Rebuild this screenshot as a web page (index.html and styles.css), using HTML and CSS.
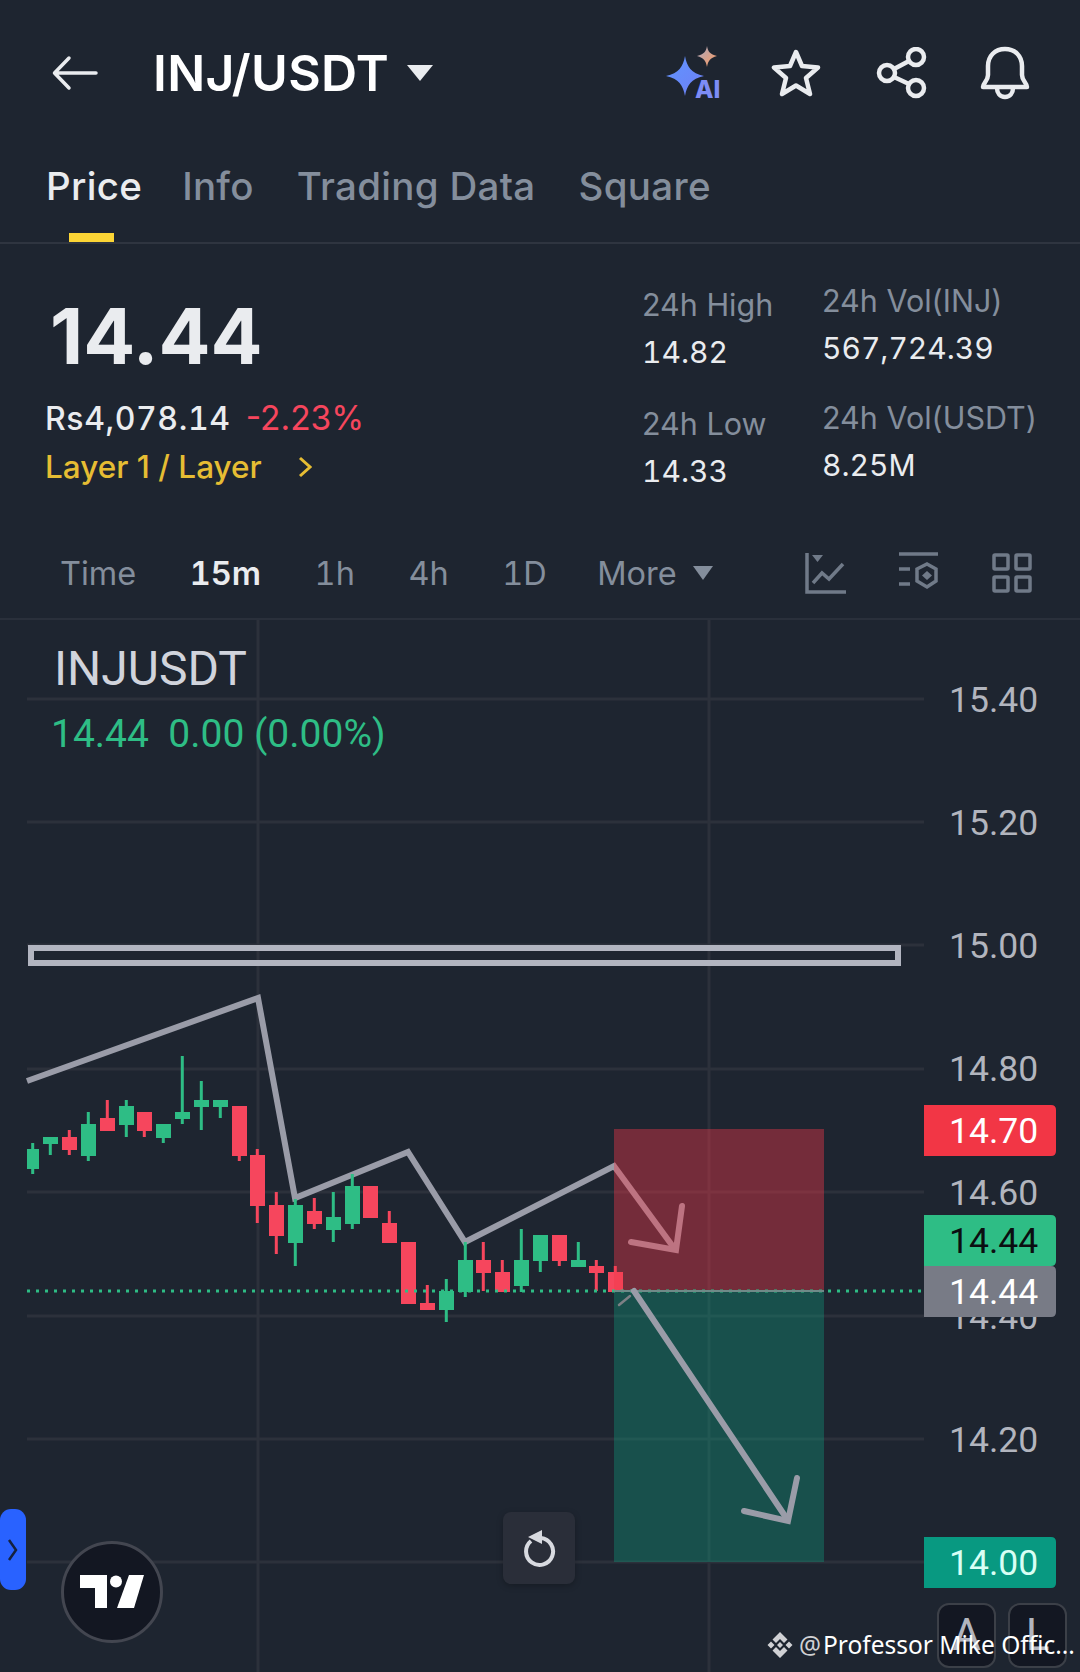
FILE: index.html
```html
<!DOCTYPE html>
<html>
    <head>
        <meta charset="UTF-8">
        <title>INJ/USDT</title>
        <link rel="stylesheet" href="styles.css">
    </head>
    <body>
        <header class="topbar">
            <svg class="back" width="46" height="36" viewBox="0 0 46 36"><path d="M44 18H3M17 3 2.500 18 17 33"/></svg>
            <h1 class="pair">INJ/USDT</h1>
            <span class="caret"></span>
            <div class="topicons">
                <svg class="aiicon" width="56" height="62" viewBox="0 -3 56 62">
                    <defs>
                        <linearGradient id="aiBlue" x1="0" y1="0" x2="1" y2="1"><stop offset="0" stop-color="#5f95ff"/><stop offset="1" stop-color="#6f7ff5"/></linearGradient>
                        <linearGradient id="aiPink" x1="0" y1="0" x2="1" y2="1"><stop offset="0" stop-color="#a7a9c4"/><stop offset="1" stop-color="#ff9a5c"/></linearGradient>
                    </defs>
                    <path class="spark" d="M20 11C22 22 26 28 39 31 26 34 22 40 20 51 18 40 14 34 1 31 14 28 18 22 20 11Z" fill="url(#aiBlue)"/>
                    <path d="M42 1C43 7 45 9 52 11 45 13 43 16 42 22 41 16 39 13 32 11 39 9 41 7 42 1Z" fill="url(#aiPink)"/>
                    <text class="ai" x="30" y="53">AI</text>
                </svg>
                <svg class="line star" width="50" height="50" viewBox="0 0 50 50"><path d="M25 4 31 18 47 19.500 35 30 39 46 25 37.500 11 46 15 30 3 19.500 19 18Z"/></svg>
                <svg class="line" width="52" height="52" viewBox="0 0 52 52"><circle cx="11" cy="26" r="8"/><circle cx="40" cy="10" r="8"/><circle cx="40" cy="41" r="8"/><path d="M18 22 33 14M18 30 33 37"/></svg>
                <svg class="line" width="52" height="54" viewBox="0 0 52 54"><path d="M4 41C4 37 9 35 9 29V20C9 10 16 3 26 3S43 10 43 20V29C43 35 48 37 48 41Z"/><path d="M18 42C18 47 21 51 26 51S34 47 34 42"/></svg>
            </div>
        </header>

        <nav class="tabs">
            <a class="tab active">Price</a>
            <a class="tab">Info</a>
            <a class="tab">Trading Data</a>
            <a class="tab">Square</a>
        </nav>

        <section class="stats">
            <div class="priceblock">
                <div class="bigprice">14.44</div>
                <div class="fiat">Rs4,078.14 <span class="down">-2.23%</span></div>
                <div class="sector">Layer 1 / Layer
                    <svg width="14" height="22" viewBox="0 0 14 22"><path d="M2 2 12 11 2 20"/></svg>
                </div>
            </div>
            <div class="statcol highlow">
                <div class="label">24h High</div>
                <div class="value">14.82</div>
                <div class="label">24h Low</div>
                <div class="value">14.33</div>
            </div>
            <div class="statcol vols">
                <div class="label">24h Vol(INJ)</div>
                <div class="value">567,724.39</div>
                <div class="label">24h Vol(USDT)</div>
                <div class="value">8.25M</div>
            </div>
        </section>

        <div class="intervals">
            <a class="interval time">Time</a>
            <a class="interval active">15m</a>
            <a class="interval">1h</a>
            <a class="interval">4h</a>
            <a class="interval">1D</a>
            <a class="interval more">More <span class="caret small"></span></a>
            <div class="charticons">
                <svg class="indicator" width="42" height="42" viewBox="0 0 42 42"><path d="M2 1V40H41M8 31 17 21 24 27 38 12"/><path class="solid" d="M7 3H18L12.500 10Z"/></svg>
                <svg width="42" height="42" viewBox="0 0 42 42"><path d="M2 2H41M2 17H13M2 32H13M30 12 39 17V29L30 35 20 29V17Z"/><path class="solid" d="M30 19 35 23.500 30 28 25 23.500Z"/></svg>
                <svg width="40" height="40" viewBox="0 0 40 40"><rect x="2" y="2" width="14" height="14" rx="1"/><rect x="24" y="2" width="14" height="14" rx="1"/><rect x="2" y="24" width="14" height="14" rx="1"/><rect x="24" y="24" width="14" height="14" rx="1"/></svg>
            </div>
        </div>

        <main class="chart">
            <svg class="canvas" width="1080" height="1052" viewBox="0 620 1080 1052">
                <g class="grid">
                    <path d="M27 699H924M27 822H924M27 945H924M27 1069H924M27 1192H924M27 1316H924M27 1439H924M27 1562H924"/>
                    <path d="M258 620V1672M709 620V1672"/>
                </g>

                <rect class="channel" x="31" y="948" width="867" height="15"/>
                <path class="drawing trend" d="M27 1081 258 998 295 1198 408 1152 465 1242 614 1166 674 1248"/>
                <path class="drawing" d="M682 1206 676 1250 631 1242"/>

                <g class="wick up">
                    <path d="M32.700 1143V1174M50.300 1137V1155M88.300 1112V1161M126.300 1100V1137M163.300 1124V1143M182.300 1056V1124M201.300 1081V1130M220.300 1100V1118M295.300 1199V1266M333.300 1192V1242M352.300 1174V1229M446.300 1279V1322M465.300 1242V1297M521.300 1229V1292M540.300 1235V1272M578.300 1242V1267"/>
                </g>
                <g class="wick down">
                    <path d="M69.300 1130V1155M107.300 1100V1131M144.300 1112V1137M239.300 1106V1161M257.300 1149V1223M276.300 1192V1254M314.300 1198V1229M389.300 1211V1243M427.300 1285V1310M483.300 1242V1291M502.300 1260V1292M559.300 1235V1266M596.300 1260V1291M615.300 1266V1292"/>
                </g>
                <g class="body up">
                    <rect x="27" y="1149" width="12" height="20"/>
                    <rect x="43" y="1137" width="15" height="7"/>
                    <rect x="81" y="1124" width="15" height="32"/>
                    <rect x="119" y="1106" width="15" height="19"/>
                    <rect x="156" y="1124" width="15" height="14"/>
                    <rect x="175" y="1112" width="15" height="7"/>
                    <rect x="194" y="1100" width="15" height="7"/>
                    <rect x="213" y="1100" width="15" height="7"/>
                    <rect x="288" y="1205" width="15" height="38"/>
                    <rect x="326" y="1217" width="15" height="13"/>
                    <rect x="345" y="1186" width="15" height="38"/>
                    <rect x="439" y="1291" width="15" height="19"/>
                    <rect x="458" y="1260" width="15" height="32"/>
                    <rect x="514" y="1260" width="15" height="26"/>
                    <rect x="533" y="1235" width="15" height="26"/>
                    <rect x="571" y="1260" width="15" height="7"/>
                </g>
                <g class="body down">
                    <rect x="62" y="1137" width="15" height="13"/>
                    <rect x="100" y="1118" width="15" height="13"/>
                    <rect x="137" y="1112" width="15" height="19"/>
                    <rect x="232" y="1106" width="15" height="50"/>
                    <rect x="250" y="1155" width="15" height="51"/>
                    <rect x="269" y="1205" width="15" height="31"/>
                    <rect x="307" y="1211" width="15" height="13"/>
                    <rect x="363" y="1186" width="15" height="32"/>
                    <rect x="382" y="1223" width="15" height="20"/>
                    <rect x="401" y="1242" width="15" height="62"/>
                    <rect x="420" y="1303" width="15" height="7"/>
                    <rect x="476" y="1260" width="15" height="13"/>
                    <rect x="495" y="1272" width="15" height="20"/>
                    <rect x="552" y="1235" width="15" height="26"/>
                    <rect x="589" y="1266" width="15" height="7"/>
                    <rect x="608" y="1272" width="15" height="20"/>
                </g>

                <rect class="stop" x="614" y="1129" width="210" height="162"/>
                <rect class="target" x="614" y="1291" width="210" height="271"/>
                <path class="lastline" d="M27 1291H924"/>
                <path class="midline" d="M614 1291H824"/>

                <path class="drawing" d="M634 1291 787 1519"/>
                <path class="drawing" d="M797 1478 788 1521 744 1511"/>
                <path class="drawing thin" d="M619 1305 630 1296"/>

                <g class="axis">
                    <text x="949" y="712">15.40</text>
                    <text x="949" y="835">15.20</text>
                    <text x="949" y="958">15.00</text>
                    <text x="949" y="1081">14.80</text>
                    <text x="949" y="1205">14.60</text>
                    <text x="949" y="1329">14.40</text>
                    <text x="949" y="1452">14.20</text>
                </g>
                <path class="tag red" d="M924 1105H1051Q1056 1105 1056 1110V1151Q1056 1156 1051 1156H924Z"/>
                <path class="tag green" d="M924 1215H1051Q1056 1215 1056 1220V1261Q1056 1266 1051 1266H924Z"/>
                <path class="tag grey" d="M924 1266H1051Q1056 1266 1056 1271V1312Q1056 1317 1051 1317H924Z"/>
                <path class="tag teal" d="M924 1537H1051Q1056 1537 1056 1542V1583Q1056 1588 1051 1588H924Z"/>
                <g class="axis tagtext">
                    <text x="949" y="1143">14.70</text>
                    <text class="dark" x="949" y="1253">14.44</text>
                    <text x="949" y="1304">14.44</text>
                    <text class="mint" x="949" y="1575">14.00</text>
                </g>
            </svg>

            <div class="legend">
                <div class="symbol">INJUSDT</div>
                <div class="ohlc">14.44&nbsp; 0.00 (0.00%)</div>
            </div>

            <div class="pill">
                <svg width="12" height="24" viewBox="0 0 12 24"><path d="M2 2 9 12 2 22"/></svg>
            </div>

            <div class="tvlogo">
                <svg width="64" height="33" viewBox="0 0 64 33"><path d="M0 0H27V33H15V13H0Z"/><circle cx="36" cy="6.500" r="6"/><path d="M49 0H64L54 33H37Z"/></svg>
            </div>

            <div class="reload">
                <svg width="34" height="38" viewBox="0 0 34 38"><path class="arc" d="M9 12A13.500 13.500 0 1 0 19 9"/><path class="head" d="M20 1V15L6 8Z"/></svg>
            </div>

            <div class="scalebtn one">A</div>
            <div class="scalebtn two">L</div>

            <div class="watermark">
                <svg width="28" height="28" viewBox="0 0 28 28"><path d="M14 1 21.500 8.500 18 12 14 8 10 12 6.500 8.500ZM5 10.500 8.500 14 5 17.500 1.500 14ZM23 10.500 26.500 14 23 17.500 19.500 14ZM14 11 17 14 14 17 11 14ZM14 27 21.500 19.500 18 16 14 20 10 16 6.500 19.500Z"/></svg>
                <span class="at">@</span><span>Professor Mike Offic...</span>
            </div>
        </main>
    </body>
</html>
```

FILE: styles.css
```css
html, body {
    margin: 0;
    padding: 0;
}
body {
    width: 1080px;
    height: 1672px;
    overflow: hidden;
    background-color: #1e2530;
    color: #eaecef;
    font-family: Inter, "Liberation Sans", sans-serif;
}
.topbar {
    display: flex;
    align-items: center;
    height: 146px;
    padding: 0 49px 0 52px;
    box-sizing: border-box;
}
.back {
    margin-right: 55px;
}
.back path {
    fill: none;
    stroke: #eaecef;
    stroke-width: 3.5;
    stroke-linecap: round;
    stroke-linejoin: round;
}
.pair {
    margin: 0;
    font-size: 50px;
    font-weight: 600;
    letter-spacing: 0.3px;
    color: #ffffff;
}
.caret {
    display: inline-block;
    margin-left: 18px;
    border-left: 13px solid transparent;
    border-right: 13px solid transparent;
    border-top: 16px solid #eaecef;
}
.topicons {
    display: flex;
    align-items: center;
    gap: 51px;
    margin-left: auto;
}
.topicons .aiicon {
    margin-right: -1px;
}
.topicons .star {
    margin-right: 4px;
}
.topicons .line path,
.topicons .line circle {
    fill: none;
    stroke: #eaecef;
    stroke-width: 4.5;
    stroke-linejoin: round;
    stroke-linecap: round;
}
.ai {
    font-size: 24px;
    font-weight: 800;
    fill: #7d8cf5;
}
.tabs {
    display: flex;
    gap: 43px;
    height: 98px;
    padding-left: 46px;
    border-bottom: 2px solid #2f3540;
    box-sizing: border-box;
}
.tab {
    position: relative;
    font-size: 38.500px;
    font-weight: 500;
    letter-spacing: 0.3px;
    line-height: 80px;
    color: #848e9c;
}
.tab.active {
    margin-right: -3px;
    color: #eaecef;
}
.tab.active::after {
    content: "";
    position: absolute;
    left: 23px;
    bottom: 0;
    width: 45px;
    height: 9px;
    background-color: #fcd535;
}
.stats {
    display: flex;
    height: 270px;
    box-sizing: border-box;
    padding-left: 45px;
}
.priceblock {
    width: 597px;
}
.bigprice {
    margin: 54px 0 0 5px;
    font-size: 77px;
    font-weight: 700;
    line-height: 76px;
    color: #eaecef;
}
.fiat {
    margin-top: 24px;
    font-size: 32px;
    font-weight: 500;
    line-height: 40px;
    letter-spacing: 0.6px;
    font-variant-numeric: tabular-nums;
}
.down {
    margin-left: 6px;
    font-size: 33.500px;
    font-weight: 400;
    letter-spacing: 0;
    font-variant-numeric: normal;
    color: #f6465d;
}
.sector {
    display: flex;
    align-items: center;
    gap: 36px;
    margin-top: 8px;
    font-size: 31.5px;
    font-weight: 500;
    line-height: 40px;
    color: #e6bd33;
}
.sector path {
    fill: none;
    stroke: #e6bd33;
    stroke-width: 3;
}
.statcol {
    display: flex;
    flex-direction: column;
}
.highlow {
    width: 180px;
    padding-top: 41px;
}
.highlow .value {
    margin-bottom: 32px;
}
.vols {
    padding-top: 37px;
}
.label {
    font-size: 30.5px;
    line-height: 40px;
    color: #848e9c;
}
.value {
    margin: 7px 0 30px;
    font-size: 30px;
    line-height: 40px;
    color: #eaecef;
    font-variant-numeric: tabular-nums;
}
.intervals {
    display: flex;
    align-items: center;
    height: 108px;
    padding: 16px 48px 0 60px;
    border-bottom: 2px solid #2a303b;
    box-sizing: border-box;
    margin-top: -2px;
}
.interval {
    margin-right: 53.500px;
    font-size: 32.500px;
    color: #848e9c;
    font-variant-numeric: tabular-nums;
}
.interval.active {
    font-weight: 600;
    color: #eaecef;
}
.interval.more {
    margin-left: -3px;
    margin-right: 0;
}
.caret.small {
    margin-left: 8px;
    border-left-width: 10.500px;
    border-right-width: 10.500px;
    border-top-width: 14px;
    border-top-color: #848e9c;
    vertical-align: 5px;
}
.charticons {
    display: flex;
    align-items: center;
    gap: 53px;
    margin-left: auto;
}
.charticons .indicator {
    margin-right: -3px;
}
.charticons path,
.charticons rect {
    fill: none;
    stroke: #707a88;
    stroke-width: 3.500;
}
.charticons .solid {
    fill: #707a88;
    stroke: none;
}
.chart {
    position: relative;
    height: 1052px;
    overflow: hidden;
}
.canvas {
    display: block;
}
.grid path {
    fill: none;
    stroke: #2c313b;
    stroke-width: 3;
}
.channel {
    fill: none;
    stroke: #b2b5c0;
    stroke-width: 6;
}
.drawing {
    fill: none;
    stroke: #9a9ca8;
    stroke-width: 6;
    stroke-linejoin: miter;
    stroke-linecap: round;
}
.drawing.trend {
    stroke-linecap: butt;
}
.drawing.thin {
    stroke-width: 2.500;
    stroke: #7d8085;
}
.wick path {
    fill: none;
    stroke-width: 3;
}
.wick.up path {
    stroke: #2ebd85;
}
.wick.down path {
    stroke: #f6465d;
}
.body.up rect {
    fill: #2ebd85;
}
.body.down rect {
    fill: #f6465d;
}
.stop {
    fill: rgba(240, 56, 74, 0.41);
}
.target {
    fill: rgba(14, 158, 128, 0.36);
}
.lastline {
    fill: none;
    stroke: #2ebd85;
    stroke-width: 3;
    stroke-dasharray: 3 6;
}
.midline {
    fill: none;
    stroke: #6f8a88;
    stroke-width: 2;
}
.axis text {
    font-family: Roboto, "Liberation Sans", sans-serif;
    font-size: 35.500px;
    fill: #b2b5be;
}
.tag.red {
    fill: #f23645;
}
.tag.green {
    fill: #2ebd85;
}
.tag.grey {
    fill: #787b86;
}
.tag.teal {
    fill: #089981;
}
.axis.tagtext text {
    fill: #ffffff;
}
.axis.tagtext .dark {
    fill: #0b0e11;
}
.axis.tagtext .mint {
    fill: #d8fff4;
}
.legend {
    position: absolute;
    left: 51px;
    top: 24px;
    font-family: Roboto, "Liberation Sans", sans-serif;
}
.symbol {
    margin-left: 3px;
    font-size: 48px;
    line-height: 50px;
    color: #d1d4dc;
}
.ohlc {
    margin-top: 15px;
    font-size: 39px;
    line-height: 50px;
    color: #2ebd85;
}
.pill {
    position: absolute;
    left: 0;
    top: 889px;
    display: flex;
    align-items: center;
    justify-content: center;
    width: 26px;
    height: 81px;
    border-radius: 11px;
    background-color: #2962ff;
}
.pill path {
    fill: none;
    stroke: #14213f;
    stroke-width: 2.500;
}
.tvlogo {
    position: absolute;
    left: 61px;
    top: 921px;
    display: flex;
    align-items: center;
    justify-content: center;
    width: 96px;
    height: 96px;
    border: 3px solid #434650;
    border-radius: 50%;
    background-color: #131722;
}
.tvlogo svg {
    fill: #ffffff;
    margin-top: -2px;
}
.reload {
    position: absolute;
    left: 503px;
    top: 892px;
    display: flex;
    align-items: center;
    justify-content: center;
    width: 72px;
    height: 72px;
    border-radius: 8px;
    background-color: #2a2e39;
    box-shadow: 0 2px 6px rgba(0, 0, 0, 0.25);
}
.arc {
    fill: none;
    stroke: #d8dae0;
    stroke-width: 4;
}
.head {
    fill: #d8dae0;
}
.scalebtn {
    position: absolute;
    top: 983px;
    width: 55px;
    height: 61px;
    border: 2px solid #3c4048;
    border-radius: 12px;
    background-color: #131722;
    font-family: Roboto, "Liberation Sans", sans-serif;
    font-size: 44px;
    line-height: 60px;
    text-align: center;
    color: #b2b5be;
}
.scalebtn.one {
    left: 937px;
}
.scalebtn.two {
    left: 1008px;
}
.watermark {
    position: absolute;
    left: 766px;
    top: 1006px;
    display: flex;
    align-items: center;
    font-family: "Noto Sans", "Liberation Sans", sans-serif;
    font-size: 24.500px;
    line-height: 38px;
    white-space: nowrap;
    color: #ffffff;
}
.watermark svg {
    fill: #d0d1d4;
    margin-right: 5px;
}
.watermark .at {
    margin-right: 2px;
    color: #d0d1d4;
}
```
